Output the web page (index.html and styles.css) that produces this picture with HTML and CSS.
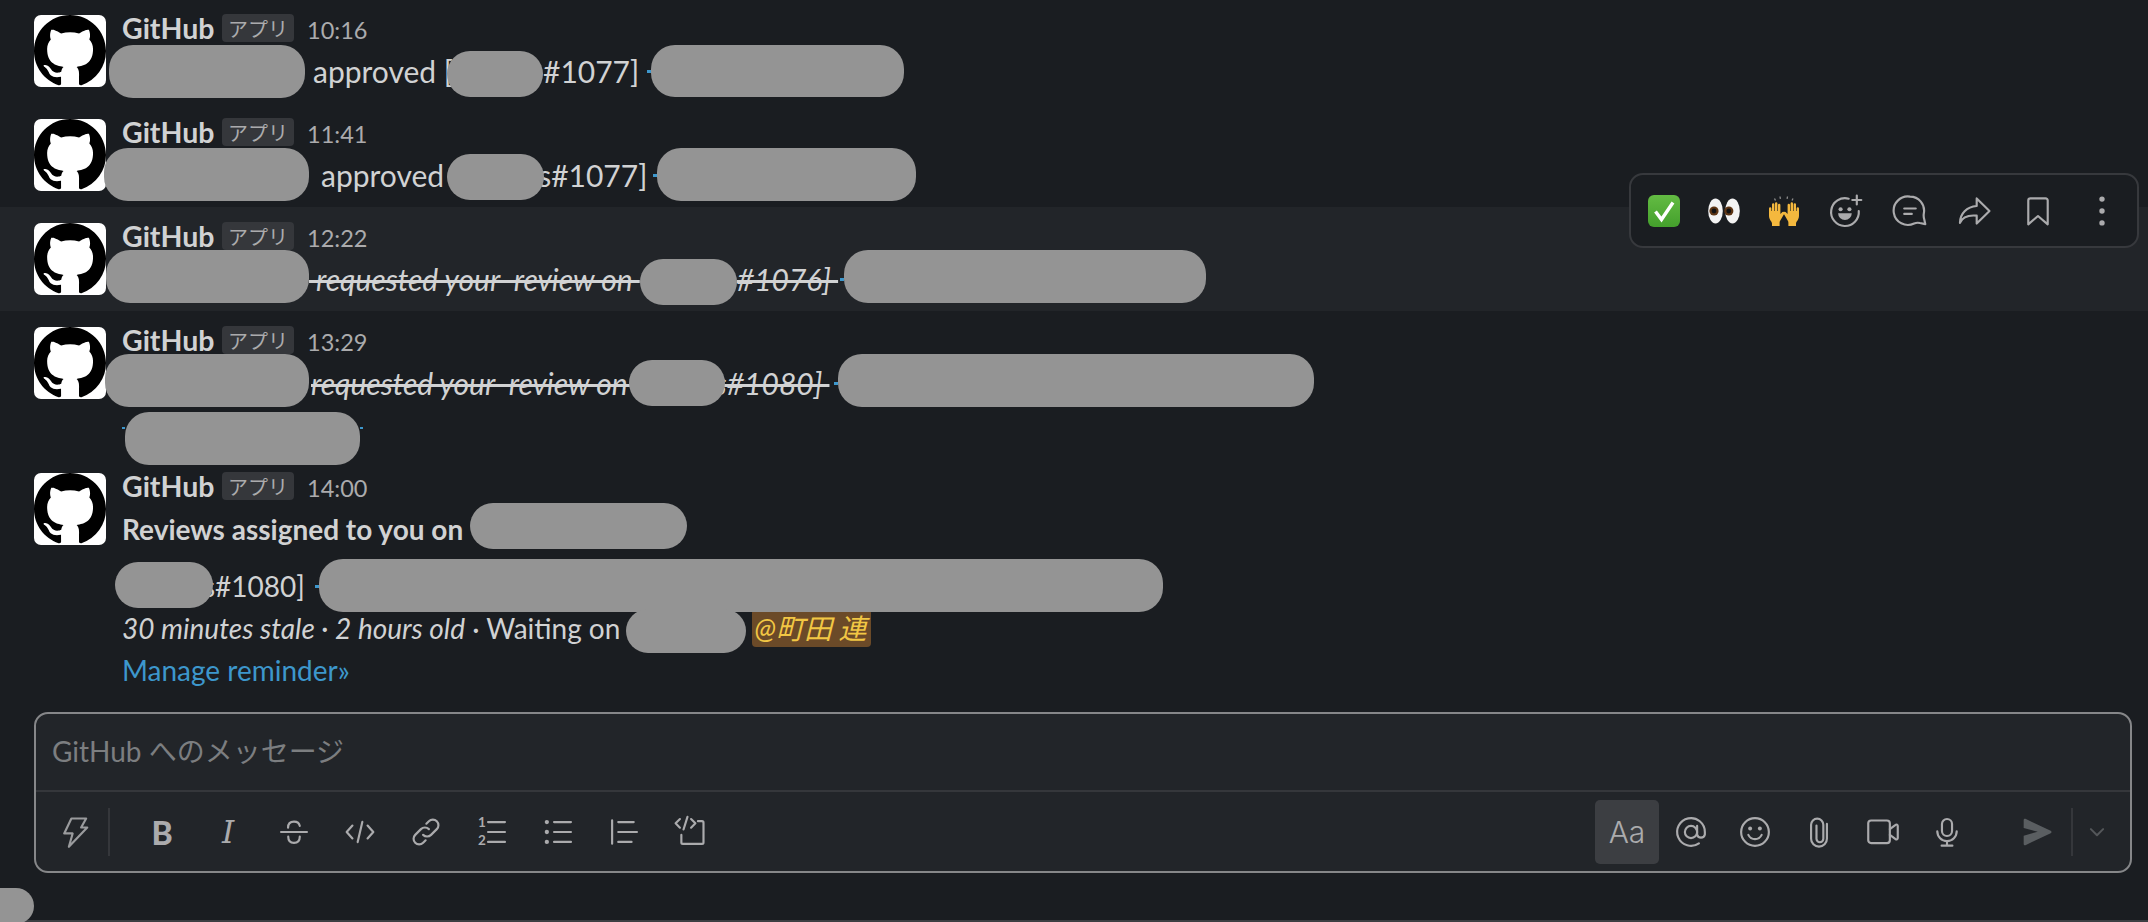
FILE: index.html
```html
<!DOCTYPE html>
<html>
<head>
<meta charset="utf-8">
<title>GitHub</title>
<link rel="stylesheet" href="styles.css">
</head>
<body>

<!-- Messages -->
<div class="list">

  <div class="row">
    <svg class="avatar" viewBox="0 0 16 16"><rect width="16" height="16" fill="#fff"/><path d="M8 0C3.58 0 0 3.58 0 8c0 3.54 2.29 6.53 5.47 7.59.4.07.55-.17.55-.38 0-.19-.01-.82-.01-1.49-2.01.37-2.53-.49-2.69-.94-.09-.23-.48-.94-.82-1.13-.28-.15-.68-.52-.01-.53.63-.01 1.08.58 1.23.82.72 1.21 1.87.87 2.33.66.07-.52.28-.87.51-1.07-1.78-.2-3.64-.89-3.64-3.95 0-.87.31-1.59.82-2.15-.08-.2-.36-1.02.08-2.12 0 0 .67-.21 2.2.82.64-.18 1.32-.27 2-.27.68 0 1.36.09 2 .27 1.53-1.04 2.2-.82 2.2-.82.44 1.1.16 1.92.08 2.12.51.56.82 1.28.82 2.15 0 3.07-1.87 3.75-3.65 3.95.29.25.54.73.54 1.48 0 1.07-.01 1.93-.01 2.2 0 .21.15.46.55.38A8.013 8.013 0 0016 8c0-4.42-3.58-8-8-8z"/></svg>
    <div class="body">
      <div class="head"><span class="name">GitHub</span><span class="badge">アプリ</span><span class="time">10:16</span></div>
      <div class="line big">
        <span class="blob b-name1"></span><span class="s-approved1">approved [</span><span class="blob b-repo1"></span><span>#1077]</span><span class="tick t-gap1"></span><span class="blob b-title1"></span>
      </div>
    </div>
  </div>

  <div class="row">
    <svg class="avatar" viewBox="0 0 16 16"><rect width="16" height="16" fill="#fff"/><path d="M8 0C3.58 0 0 3.58 0 8c0 3.54 2.29 6.53 5.47 7.59.4.07.55-.17.55-.38 0-.19-.01-.82-.01-1.49-2.01.37-2.53-.49-2.69-.94-.09-.23-.48-.94-.82-1.13-.28-.15-.68-.52-.01-.53.63-.01 1.08.58 1.23.82.72 1.21 1.87.87 2.33.66.07-.52.28-.87.51-1.07-1.78-.2-3.64-.89-3.64-3.95 0-.87.31-1.59.82-2.15-.08-.2-.36-1.02.08-2.12 0 0 .67-.21 2.2.82.64-.18 1.32-.27 2-.27.68 0 1.36.09 2 .27 1.53-1.04 2.2-.82 2.2-.82.44 1.1.16 1.92.08 2.12.51.56.82 1.28.82 2.15 0 3.07-1.87 3.75-3.65 3.95.29.25.54.73.54 1.48 0 1.07-.01 1.93-.01 2.2 0 .21.15.46.55.38A8.013 8.013 0 0016 8c0-4.42-3.58-8-8-8z"/></svg>
    <div class="body">
      <div class="head"><span class="name">GitHub</span><span class="badge">アプリ</span><span class="time">11:41</span></div>
      <div class="line big">
        <span class="blob b-name2"></span><span class="s-approved2">approved</span><span class="blob b-repo2"></span><span class="s-hash2">s#1077]</span><span class="tick t-gap2"></span><span class="blob b-title2"></span>
      </div>
    </div>
  </div>

  <div class="row hover">
    <svg class="avatar" viewBox="0 0 16 16"><rect width="16" height="16" fill="#fff"/><path d="M8 0C3.58 0 0 3.58 0 8c0 3.54 2.29 6.53 5.47 7.59.4.07.55-.17.55-.38 0-.19-.01-.82-.01-1.49-2.01.37-2.53-.49-2.69-.94-.09-.23-.48-.94-.82-1.13-.28-.15-.68-.52-.01-.53.63-.01 1.08.58 1.23.82.72 1.21 1.87.87 2.33.66.07-.52.28-.87.51-1.07-1.78-.2-3.64-.89-3.64-3.95 0-.87.31-1.59.82-2.15-.08-.2-.36-1.02.08-2.12 0 0 .67-.21 2.2.82.64-.18 1.32-.27 2-.27.68 0 1.36.09 2 .27 1.53-1.04 2.2-.82 2.2-.82.44 1.1.16 1.92.08 2.12.51.56.82 1.28.82 2.15 0 3.07-1.87 3.75-3.65 3.95.29.25.54.73.54 1.48 0 1.07-.01 1.93-.01 2.2 0 .21.15.46.55.38A8.013 8.013 0 0016 8c0-4.42-3.58-8-8-8z"/></svg>
    <div class="body">
      <div class="head"><span class="name">GitHub</span><span class="badge">アプリ</span><span class="time">12:22</span></div>
      <div class="line big">
        <span class="blob b-name3"></span><span class="struck"> requested your  review on </span><span class="blob b-repo3"></span><span class="struck">#1076] </span><span class="tick t-gap3"></span><span class="blob b-title3"></span>
      </div>
    </div>

    <!-- Hover actions -->
    <div class="actions">
      <button class="act emoji">
        <svg width="32" height="32" viewBox="0 0 32 32"><defs><linearGradient id="gr" x1="0" y1="0" x2="0" y2="1"><stop offset="0" stop-color="#63bb43"/><stop offset="1" stop-color="#44a02c"/></linearGradient></defs><rect width="32" height="32" rx="6" fill="url(#gr)"/><path d="M7.5 16.5l6 8L25 7.5" fill="none" stroke="#fff" stroke-width="3.4"/></svg>
      </button>
      <button class="act emoji">
        <svg width="32" height="26" viewBox="0 0 32 26"><ellipse cx="7.5" cy="13" rx="7.3" ry="12.4" fill="#f3f3f3"/><ellipse cx="24.5" cy="13" rx="7.3" ry="12.4" fill="#f3f3f3"/><circle cx="6" cy="13" r="4.6" fill="#5c3413"/><circle cx="20.8" cy="13" r="4.6" fill="#5c3413"/><circle cx="6" cy="13" r="2.4" fill="#111"/><circle cx="20.8" cy="13" r="2.4" fill="#111"/></svg>
      </button>
      <button class="act emoji">
        <svg width="36" height="32" viewBox="0 0 36 32"><g fill="#f4b83e"><path d="M3 13.5a1.2 1.2 0 0 1 2.4 0V16h.6V9.5a1.2 1.2 0 0 1 2.4 0V16h.6V8.5a1.2 1.2 0 0 1 2.4 0V16h.6V10a1.2 1.2 0 0 1 2.4 0v9l2-2a1.3 1.3 0 0 1 2 1.6l-3.8 6.4c-.6 1-1 1.6-1 3V31H6v-2.5c0-1.2-1-2-1.8-3.5C3.3 23.4 3 22 3 20.5z"/><path d="M33 13.5a1.2 1.2 0 0 0-2.4 0V16H30V9.5a1.2 1.2 0 0 0-2.4 0V16H27V8.5a1.2 1.2 0 0 0-2.4 0V16H24V10a1.2 1.2 0 0 0-2.4 0v9l-2-2a1.3 1.3 0 0 0-2 1.6l3.8 6.4c.6 1 1 1.6 1 3V31H30v-2.5c0-1.2 1-2 1.8-3.5.9-1.6 1.2-3 1.2-4.5z"/></g><path d="M8.5 3.5l1 2M14 1.5l.4 2.4M21.5 1.5l-.4 2.4M27 3.5l-1 2" stroke="#8d8d8d" stroke-width="1.3" fill="none"/></svg>
      </button>
      <button class="act">
        <svg class="ico" viewBox="0 0 20 20"><path d="M11.5 3.2A7.7 7.7 0 1 0 17.1 10"/><circle class="fill" cx="7" cy="9" r="1.15"/><circle class="fill" cx="11.9" cy="9" r="1.15"/><path class="fill" d="M5.6 11.2h7.6a3.8 3.8 0 0 1-7.6 0z"/><path d="M16 1.4v5M13.5 3.9h5"/></svg>
      </button>
      <button class="act">
        <svg class="ico" viewBox="0 0 20 20"><path d="M10 2a7.8 7.8 0 0 1 7.7 9.2c-.2 1.2-.2 2.2.2 3.4l.6 2.7-3-.6c-1.2-.3-2.1-.2-3.2.2A7.9 7.9 0 1 1 10 2z"/><path d="M6.8 8.6h6.4M6.8 11.6h4.2"/></svg>
      </button>
      <button class="act">
        <svg class="ico" viewBox="0 0 20 20"><path d="M11.5 3L18.6 10l-7.1 7v-4.4c-4.2-.4-7.8.4-9.3 4 0-5.2 3.8-9 9.3-9.4z"/></svg>
      </button>
      <button class="act">
        <svg class="ico" viewBox="0 0 20 20"><path d="M4.6 4.2a1.2 1.2 0 0 1 1.2-1.2h8.4a1.2 1.2 0 0 1 1.2 1.2v13.2l-5.4-4.6-5.4 4.6z"/></svg>
      </button>
      <button class="act">
        <svg class="ico" viewBox="0 0 20 20"><circle class="fill" cx="10" cy="3.4" r="1.5"/><circle class="fill" cx="10" cy="10" r="1.5"/><circle class="fill" cx="10" cy="16.6" r="1.5"/></svg>
      </button>
    </div>
  </div>

  <div class="row">
    <svg class="avatar" viewBox="0 0 16 16"><rect width="16" height="16" fill="#fff"/><path d="M8 0C3.58 0 0 3.58 0 8c0 3.54 2.29 6.53 5.47 7.59.4.07.55-.17.55-.38 0-.19-.01-.82-.01-1.49-2.01.37-2.53-.49-2.69-.94-.09-.23-.48-.94-.82-1.13-.28-.15-.68-.52-.01-.53.63-.01 1.08.58 1.23.82.72 1.21 1.87.87 2.33.66.07-.52.28-.87.51-1.07-1.78-.2-3.64-.89-3.64-3.95 0-.87.31-1.59.82-2.15-.08-.2-.36-1.02.08-2.12 0 0 .67-.21 2.2.82.64-.18 1.32-.27 2-.27.68 0 1.36.09 2 .27 1.53-1.04 2.2-.82 2.2-.82.44 1.1.16 1.92.08 2.12.51.56.82 1.28.82 2.15 0 3.07-1.87 3.75-3.65 3.95.29.25.54.73.54 1.48 0 1.07-.01 1.93-.01 2.2 0 .21.15.46.55.38A8.013 8.013 0 0016 8c0-4.42-3.58-8-8-8z"/></svg>
    <div class="body">
      <div class="head"><span class="name">GitHub</span><span class="badge">アプリ</span><span class="time">13:29</span></div>
      <div class="line big">
        <span class="blob b-name4"></span><span class="struck s-req4">requested your  review on </span><span class="blob b-repo4"></span><span class="struck s-hash4">s#1080] </span><span class="tick t-gap4"></span><span class="blob b-title4"></span>
      </div>
      <div class="line">
        <span class="blob b-title4b"></span>
      </div>
    </div>
  </div>

  <div class="row">
    <svg class="avatar" viewBox="0 0 16 16"><rect width="16" height="16" fill="#fff"/><path d="M8 0C3.58 0 0 3.58 0 8c0 3.54 2.29 6.53 5.47 7.59.4.07.55-.17.55-.38 0-.19-.01-.82-.01-1.49-2.01.37-2.53-.49-2.69-.94-.09-.23-.48-.94-.82-1.13-.28-.15-.68-.52-.01-.53.63-.01 1.08.58 1.23.82.72 1.21 1.87.87 2.33.66.07-.52.28-.87.51-1.07-1.78-.2-3.64-.89-3.64-3.95 0-.87.31-1.59.82-2.15-.08-.2-.36-1.02.08-2.12 0 0 .67-.21 2.2.82.64-.18 1.32-.27 2-.27.68 0 1.36.09 2 .27 1.53-1.04 2.2-.82 2.2-.82.44 1.1.16 1.92.08 2.12.51.56.82 1.28.82 2.15 0 3.07-1.87 3.75-3.65 3.95.29.25.54.73.54 1.48 0 1.07-.01 1.93-.01 2.2 0 .21.15.46.55.38A8.013 8.013 0 0016 8c0-4.42-3.58-8-8-8z"/></svg>
    <div class="body">
      <div class="head"><span class="name">GitHub</span><span class="badge">アプリ</span><span class="time">14:00</span></div>
      <div class="line">
        <strong>Reviews assigned to you on </strong><span class="blob b-team5"></span>
      </div>
      <div class="line spaced">
        <span class="blob b-repo5"></span><span class="s-hash5">s#1080] </span><span class="tick t-gap5"></span><span class="blob b-title5"></span>
      </div>
      <div class="line">
        <em>30 minutes stale · 2 hours old</em><span> · Waiting on </span><span class="blob b-user5"></span><em class="mention">@町田 連</em>
      </div>
      <div class="line">
        <span class="link">Manage reminder»</span>
      </div>
    </div>
  </div>

</div>

<!-- Message box -->
<div class="composer">
  <div class="placeholder">GitHub へのメッセージ</div>
  <div class="toolbar">
    <div class="tools">
      <button class="tool dim-first">
        <svg class="ico" viewBox="0 0 20 20"><path d="M8 2.5h8.2l-2.8 5h3.4L6.6 18.2l2.1-7.4H4z"/></svg>
      </button>
      <span class="sep"></span>
      <button class="tool first glyph bold">B</button>
      <button class="tool glyph slab">I</button>
      <button class="tool">
        <svg class="ico" viewBox="0 0 20 20"><path d="M2.8 10h14.4M6.7 7.6c0-2.2 1.4-3.4 3.3-3.4 1.7 0 2.9.8 3.2 2.4M6.8 12.6c0 2.2 1.3 3.4 3.2 3.4s3.2-1.2 3.2-3.4"/></svg>
      </button>
      <button class="tool">
        <svg class="ico" viewBox="0 0 20 20"><path d="M5.8 6.4L2.6 10l3.2 3.6M14.2 6.4l3.2 3.6-3.2 3.6M11.3 4.4L8.7 15.6"/></svg>
      </button>
      <button class="tool">
        <svg class="ico" viewBox="0 0 20 20"><path d="M8.4 11.6a3.1 3.1 0 0 0 4.4 0l3.2-3.2a3.1 3.1 0 0 0-4.4-4.4l-1.4 1.4M11.6 8.4a3.1 3.1 0 0 0-4.4 0L4 11.6A3.1 3.1 0 0 0 8.4 16l1.4-1.4"/></svg>
      </button>
      <button class="tool">
        <svg class="ico" viewBox="0 0 20 20"><text class="num" x="2.2" y="7.2">1</text><text class="num" x="2.2" y="17.4">2</text><path d="M7.8 4.5h9.4M7.8 10h9.4M7.8 15.5h9.4"/></svg>
      </button>
      <button class="tool">
        <svg class="ico" viewBox="0 0 20 20"><circle class="fill" cx="3.8" cy="4.5" r="1.2"/><circle class="fill" cx="3.8" cy="10" r="1.2"/><circle class="fill" cx="3.8" cy="15.5" r="1.2"/><path d="M7.8 4.5h9.4M7.8 10h9.4M7.8 15.5h9.4"/></svg>
      </button>
      <button class="tool">
        <svg class="ico" viewBox="0 0 20 20"><path d="M3.4 3.5v13M6.8 4.5h8.6M6.8 10h10.4M6.8 15.5h7.4"/></svg>
      </button>
      <button class="tool">
        <svg class="ico" viewBox="0 0 20 20"><path d="M4.4 2.8L2 5.2l2.4 2.4M10.6 2.8L13 5.2l-2.4 2.4M8.6 1.6L6.4 8.6M14.4 4h2.3a.8.8 0 0 1 .8.8v11a.8.8 0 0 1-.8.8H6a.8.8 0 0 1-.8-.8V11.6"/></svg>
      </button>
    </div>
    <div class="tools">
      <button class="tool on glyph thin">Aa</button>
      <button class="tool">
        <svg class="ico" viewBox="0 0 20 20"><circle cx="10" cy="10" r="3.4"/><path d="M13.4 6.6V11.4a2.2 2.2 0 0 0 4.3 0V10a7.7 7.7 0 1 0-3.3 6.3"/></svg>
      </button>
      <button class="tool">
        <svg class="ico" viewBox="0 0 20 20"><circle cx="10" cy="10" r="7.7"/><circle class="fill" cx="7.3" cy="8" r="1.1"/><circle class="fill" cx="12.7" cy="8" r="1.1"/><path d="M6.3 11.6c.8 1.6 2.1 2.4 3.7 2.4s2.9-.8 3.7-2.4"/></svg>
      </button>
      <button class="tool">
        <svg class="ico" viewBox="0 0 20 20"><path d="M14.4 5.5v8.2a4.4 4.4 0 0 1-8.8 0V6a3.4 3.4 0 0 1 6.8 0v7.8a1.9 1.9 0 0 1-3.8 0V6.4"/></svg>
      </button>
      <button class="tool">
        <svg class="ico" viewBox="0 0 20 20"><rect x="1.8" y="3.6" width="12" height="12.6" rx="1.6"/><path d="M13.8 8.4l3.2-2.4c.5-.4 1.2 0 1.2.6v6.8c0 .6-.7 1-1.2.6l-3.2-2.4"/></svg>
      </button>
      <button class="tool">
        <svg class="ico" viewBox="0 0 20 20"><rect x="7.2" y="2.8" width="5.6" height="9.4" rx="2.8"/><path d="M4.6 9.6a5.4 5.4 0 0 0 10.8 0M10 15v2.6M7 17.6h6"/></svg>
      </button>
    </div>
    <div class="send">
      <svg class="send-ico" viewBox="0 0 20 20"><path d="M2.6 3.4c0-.6.5-.9 1-.7l14 6.6c.6.3.6 1.1 0 1.4l-14 6.6c-.5.2-1-.1-1-.7v-4.5l7.8-2.3-7.8-2z"/></svg>
      <span class="sep"></span>
      <svg class="chev" viewBox="0 0 20 20"><path d="M6.6 8.4L10 11.8l3.4-3.4"/></svg>
    </div>
  </div>
</div>

<!-- Bottom edge -->
<div class="foot"><span class="blob b-foot"></span></div>

</body>
</html>
```

FILE: styles.css
```css
* {
  box-sizing: border-box;
}

html, body {
  height: 100%;
}

body {
  margin: 0;
  background-color: #1a1d21;
  color: #d1d2d3;
  font-family: Lato, "Noto Sans CJK JP", sans-serif;
  font-size: 28px;
  overflow: hidden;
  display: flex;
  flex-direction: column;
}

button {
  background: none;
  border: none;
  padding: 0;
  color: inherit;
  font-family: inherit;
}

/* messages */
.list {
  margin-top: -1px;
}

.row {
  position: relative;
  display: flex;
  gap: 16px;
  padding: 16px 0 11px 34px;
}

.row.hover {
  background-color: #222529;
}

.avatar {
  flex: none;
  width: 72px;
  height: 72px;
  border-radius: 7px;
}

.body {
  min-width: 0;
}

.head {
  display: flex;
  align-items: center;
  height: 38px;
  margin-top: -6px;
  margin-bottom: 3px;
}

.name {
  font-weight: 700;
  font-size: 28.5px;
  width: 100px;
}

.badge {
  display: flex;
  align-items: center;
  justify-content: center;
  width: 72px;
  height: 28px;
  background-color: #35373b;
  border-radius: 4px;
  color: #ababad;
  font-size: 20px;
}

.time {
  margin-left: 13px;
  color: #ababad;
  font-size: 23.5px;
  margin-top: 3px;
}

.line {
  display: flex;
  align-items: center;
  height: 42px;
  white-space: pre;
}

.line.big {
  font-size: 30px;
}

.line.spaced {
  margin-top: 15px;
}

.struck {
  font-style: italic;
  text-decoration: line-through;
}

.s-req4 {
  margin-left: 2px;
}

.link {
  color: #3d97cc;
}

strong {
  font-weight: 700;
}

.mention {
  flex: none;
  width: 119px;
  height: 38px;
  margin-left: 6px;
  padding-left: 3px;
  line-height: 38px;
  background-color: #6b4a28;
  border-radius: 4px;
  color: #f2c744;
}

/* redaction marks */
.blob {
  position: relative;
  flex: none;
  display: block;
  background-color: #949494;
  border-radius: 24px;
  height: 53px;
  z-index: 1;
}

.tick {
  flex: none;
  width: 4px;
  height: 3px;
  background-color: #3d97cc;
}

.b-name1 { width: 196px; margin-left: -13px; top: 0; }
.s-approved1 { margin-left: 8px; }
.b-repo1 { width: 96px; height: 46px; margin-left: -6px; top: 3px; }
.t-gap1 { margin-left: 8px; }
.b-title1 { width: 253px; height: 52px; top: 0; }

.b-name2 { width: 205px; margin-left: -18px; top: -1px; }
.s-approved2 { margin-left: 12px; }
.b-repo2 { width: 97px; height: 46px; margin-left: 3px; top: 2px; }
.s-hash2 { margin-left: -6px; }
.t-gap2 { margin-left: 6px; }
.b-title2 { width: 259px; top: -1px; }

.b-name3 { width: 203px; margin-left: -16px; top: -3px; }
.b-repo3 { width: 97px; height: 46px; margin-left: 0; top: 3px; }
.t-gap3 { margin-left: 2px; }
.b-title3 { width: 362px; top: -3px; }

.b-name4 { width: 204px; margin-left: -17px; top: -3px; }
.b-repo4 { width: 96px; height: 46px; margin-left: -6px; top: 0; }
.s-hash4 { margin-left: -10px; }
.t-gap4 { margin-left: 5px; }
.b-title4 { width: 476px; top: -3px; }
.b-title4b { width: 235px; margin-left: 3px; top: 13px; }

.b-title4b::before,
.b-title4b::after {
  content: "";
  position: absolute;
  top: 15px;
  width: 3px;
  height: 2px;
  background-color: #3d97cc;
}

.b-title4b::before { left: -3px; }
.b-title4b::after { right: -3px; }

.b-team5 { width: 217px; height: 46px; top: -3px; }
.b-repo5 { width: 98px; height: 46px; margin-left: -7px; top: -1px; }
.s-hash5 { margin-left: -10px; }
.t-gap5 { margin-left: 3px; }
.b-title5 { width: 844px; top: -1px; }
.b-user5 { width: 120px; height: 44px; margin-left: -2px; top: 3px; }

.b-foot {
  position: absolute;
  left: -20px;
  bottom: -2px;
  width: 54px;
  height: 36px;
  border-radius: 18px;
}

/* hover actions */
.actions {
  position: absolute;
  top: -34px;
  right: 9px;
  display: flex;
  width: 510px;
  height: 75px;
  padding: 0 2px 0 3px;
  background-color: #1a1d21;
  border: 2px solid #37393d;
  border-radius: 14px;
}

.act {
  display: flex;
  align-items: center;
  justify-content: center;
  width: 64px;
}

.act.emoji {
  width: 60px;
}

.ico {
  width: 36px;
  height: 36px;
  fill: none;
  stroke: #ababad;
  stroke-width: 1.2;
  stroke-linecap: round;
  stroke-linejoin: round;
}

.ico .fill {
  fill: #ababad;
  stroke: none;
}

.ico .num {
  fill: #ababad;
  stroke: none;
  font-family: Lato, sans-serif;
  font-weight: 700;
  font-size: 7.5px;
}

/* message box */
.composer {
  flex: none;
  height: 161px;
  margin: 10px 16px 0 34px;
  background-color: #222529;
  border: 2px solid #868789;
  border-radius: 14px;
}

.placeholder {
  height: 78px;
  padding-left: 16px;
  line-height: 74px;
  color: #7c7e80;
  border-bottom: 2px solid #35373b;
}

.toolbar {
  display: flex;
  align-items: center;
  justify-content: space-between;
  height: 79px;
  padding-top: 1px;
  padding-left: 6px;
}

.tools {
  display: flex;
  align-items: center;
}

.tool {
  display: flex;
  align-items: center;
  justify-content: center;
  width: 64px;
  height: 64px;
  border-radius: 5px;
  color: #ababad;
}

.tool.dim-first .ico {
  stroke: #9a9b9d;
}

.tool.first {
  margin-left: 19px;
}

.tools:first-child .tool {
  width: 66px;
}

.glyph.bold {
  font-family: Lato, sans-serif;
  font-weight: 900;
  font-size: 32px;
}

.glyph.slab {
  font-family: "DejaVu Serif", serif;
  font-style: italic;
  font-size: 31px;
}

.glyph.thin {
  font-family: Inter, sans-serif;
  font-weight: 300;
  font-size: 30px;
}

.tool.on {
  background-color: #3c3e42;
}

.sep {
  width: 2px;
  height: 48px;
  background-color: #35373b;
}

.toolbar > .tools:nth-child(2) {
  margin-left: auto;
}

.send {
  display: flex;
  align-items: center;
  padding-right: 15px;
  margin-left: 40px;
}

.send-ico {
  width: 36px;
  height: 36px;
  fill: #5a5e61;
}

.send .sep {
  margin-left: 16px;
  margin-right: 6px;
}

.chev {
  width: 36px;
  height: 36px;
  fill: none;
  stroke: #54575a;
  stroke-width: 1.1;
  stroke-linecap: round;
  stroke-linejoin: round;
}

/* bottom edge */
.foot {
  position: relative;
  margin-top: auto;
  height: 2px;
  background-color: #3c3e42;
}
```
